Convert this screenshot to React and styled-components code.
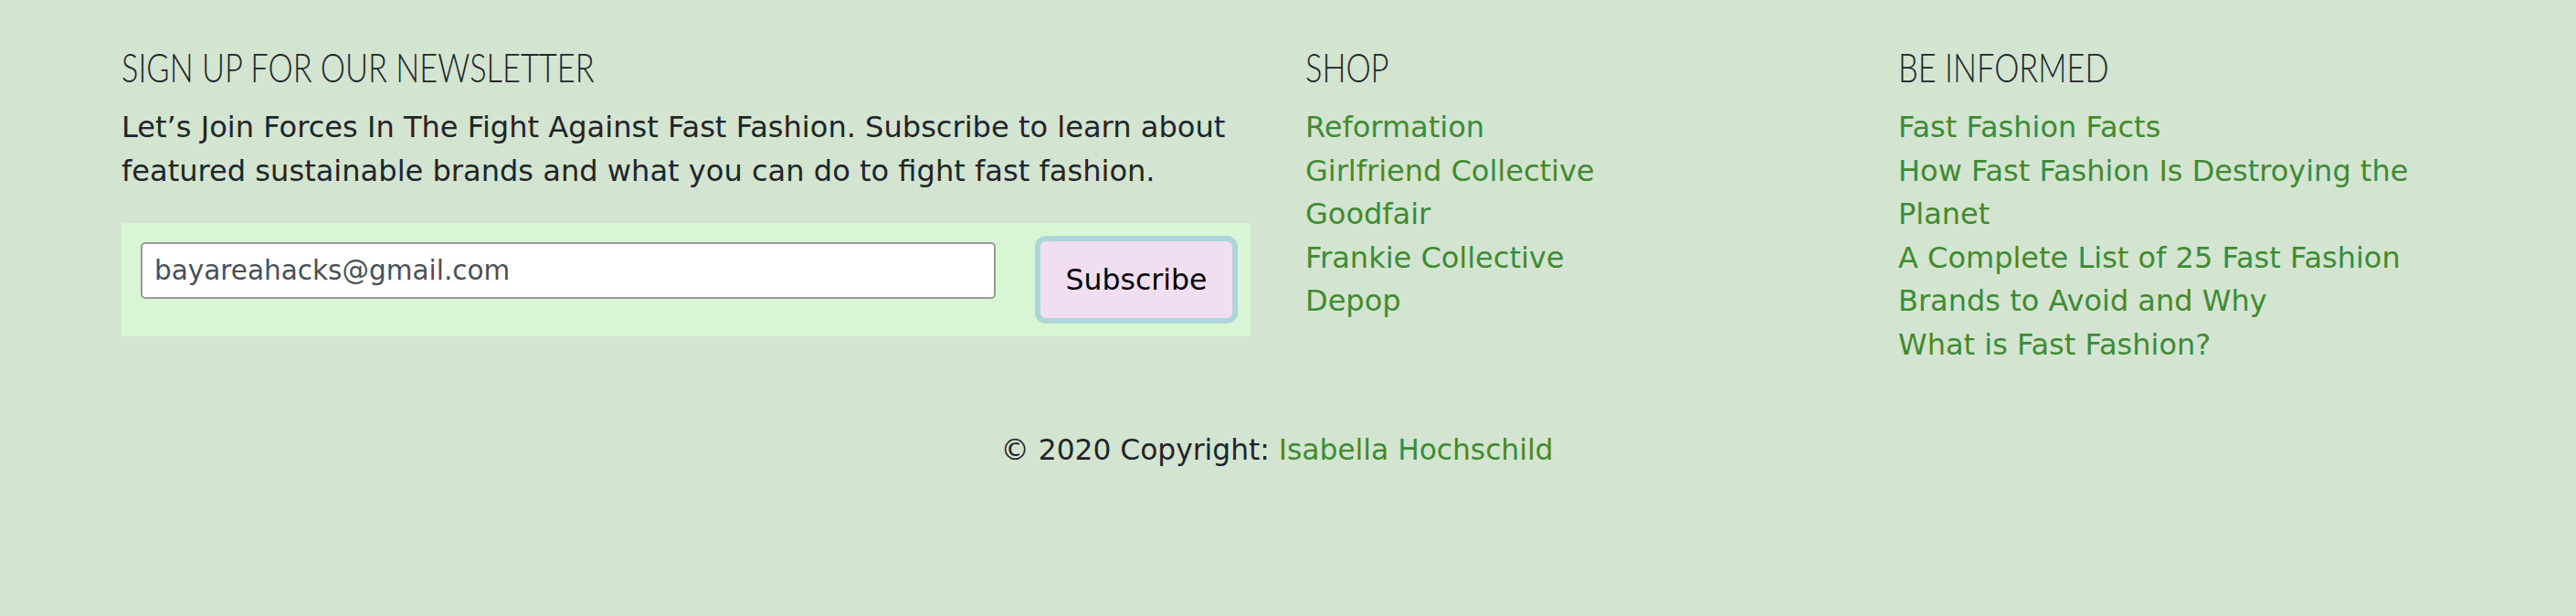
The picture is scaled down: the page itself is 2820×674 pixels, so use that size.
import styled, { createGlobalStyle } from "styled-components";

const GlobalStyle = createGlobalStyle`
  html, body {
    margin: 0;
    padding: 0;
    background: #d3e4d0;
  }
  body {
    font-family: "DejaVu Sans", "Liberation Sans", sans-serif;
    color: #212529;
  }
`;

const shopLinks = [
  "Reformation",
  "Girlfriend Collective",
  "Goodfair",
  "Frankie Collective",
  "Depop",
];

const infoLinks = [
  "Fast Fashion Facts",
  "How Fast Fashion Is Destroying the Planet",
  "A Complete List of 25 Fast Fashion Brands to Avoid and Why",
  "What is Fast Fashion?",
];

function App() {
  return (
    <>
      <GlobalStyle />
      <Footer>
        <Row>
          <Col>
            <Heading>
              <HeadingText>SIGN UP FOR OUR NEWSLETTER</HeadingText>
            </Heading>
            <Blurb>
              Let’s Join Forces In The Fight Against Fast Fashion. Subscribe to learn about
              <br />
              featured sustainable brands and what you can do to fight fast fashion.
            </Blurb>
            <SignupBox>
              <EmailInput type="email" defaultValue="bayareahacks@gmail.com" />
              <SubscribeButton>Subscribe</SubscribeButton>
            </SignupBox>
          </Col>
          <Col>
            <Heading>
              <HeadingText>SHOP</HeadingText>
            </Heading>
            <LinkList>
              {shopLinks.map((l) => (
                <li key={l}>
                  <FooterLink href="#">{l}</FooterLink>
                </li>
              ))}
            </LinkList>
          </Col>
          <Col>
            <Heading>
              <HeadingText>BE INFORMED</HeadingText>
            </Heading>
            <LinkList>
              {infoLinks.map((l) => (
                <li key={l}>
                  <FooterLink href="#">{l}</FooterLink>
                </li>
              ))}
            </LinkList>
          </Col>
        </Row>
        <Copyright>
          © 2020 Copyright: <FooterLink href="#">Isabella Hochschild</FooterLink>
        </Copyright>
      </Footer>
    </>
  );
}

var Footer = styled.footer`
    background: #d3e4d0;
    min-height: 674px;
    padding-top: 48px;
    box-sizing: border-box;
  `,
  Row = styled.div`
    display: grid;
    grid-template-columns: 1236px 589px 589px;
    column-gap: 60px;
    padding: 0 133px;
  `,
  Col = styled.div`
    min-width: 0;
  `,
  Heading = styled.h5`
    margin: 0 0 16px;
    font-family: "Lato", sans-serif;
    font-weight: 300;
    font-size: 43px;
    line-height: 52px;
    color: #212529;
    white-space: nowrap;
  `,
  HeadingText = styled.span`
    display: inline-block;
    transform: scaleX(0.8);
    transform-origin: left center;
  `,
  Blurb = styled.p`
    margin: 0 0 33px;
    font-size: 32.1px;
    line-height: 47.5px;
    color: #212529;
    white-space: nowrap;
  `,
  SignupBox = styled.div`
    display: flex;
    align-items: flex-start;
    height: 124px;
    box-sizing: border-box;
    padding: 14px;
    background: #d8f5d4;
  `,
  EmailInput = styled.input`
    flex: 1;
    height: 62px;
    margin: 7px 43px 0 7px;
    padding: 0 13px;
    box-sizing: border-box;
    border: 2px solid #9a9a9a;
    border-radius: 5px;
    background: #fff;
    font-family: "DejaVu Sans", sans-serif;
    font-size: 29.5px;
    color: #495057;
    outline: none;
  `,
  SubscribeButton = styled.button`
    width: 222px;
    height: 96px;
    box-sizing: border-box;
    border: 6px solid #aed5da;
    border-radius: 12px;
    background: #f1dff1;
    font-family: "DejaVu Sans", sans-serif;
    font-size: 31.5px;
    color: #000;
    cursor: pointer;
  `,
  LinkList = styled.ul`
    list-style: none;
    margin: 0;
    padding: 0;
    font-size: 32px;
    line-height: 47.5px;
  `,
  FooterLink = styled.a`
    color: #3f8b32;
    text-decoration: none;
  `,
  Copyright = styled.div`
    margin-top: 68px;
    text-align: center;
    font-size: 31.3px;
    line-height: 47.5px;
    color: #212529;
    padding: 0 157px 0 133px;
  `;

export default App;
